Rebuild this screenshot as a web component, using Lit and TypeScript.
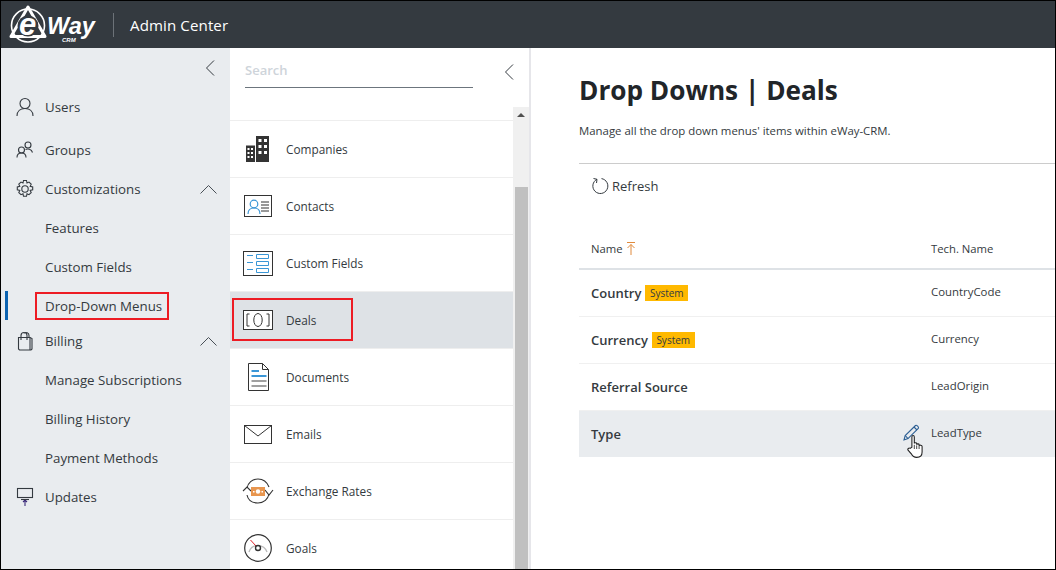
import { LitElement, html, css, svg } from "lit";
import { customElement } from "lit/decorators.js";

const chev = (up: boolean) => html`<svg class="chev" width="20" height="12" viewBox="0 0 20 12"><path d="${up ? "M1.5 10.5 9.5 2.500 17.500 10.500" : ""}" fill="none" stroke="#495057" stroke-width="1"/></svg>`;
const back = html`<svg width="10" height="18" viewBox="0 0 10 18"><path d="M9 1.500 1.500 9 9 16.500" fill="none" stroke="#343a40" stroke-width="1"/></svg>`;

const navIcons: Record<string, unknown> = {
  user: svg`<circle cx="10" cy="6.500" r="5" /><path d="M2 19c0-5 3.500-7.500 8-7.500s8 2.500 8 7.500"/>`,
  group: svg`<circle cx="13" cy="5" r="3"/><path d="M10.500 9.500c2-1 6-.5 7 3"/><circle cx="6.500" cy="10" r="3"/><path d="M2 17.500c0-3 2-4.500 4.500-4.500s4.500 1.500 4.500 4.500"/>`,
  gear: svg`<path d="M8.500 1.500h3l.5 2.500 2-.9 2.200 2.100-1 2.100 2.500.6v3l-2.500.6 1 2.100-2.200 2.100-2-.9-.5 2.500h-3l-.5-2.500-2 .9-2.200-2.100 1-2.100-2.500-.6v-3l2.500-.6-1-2.100 2.200-2.100 2 .9z"/><circle cx="10" cy="10" r="3.200"/>`,
  bag: svg`<path d="M3.500 6.500h11.500l2 1v10.500l-1 1H4.500l-1-1z"/><path d="M15 6.500v12.500"/><path d="M6 9V4.500a3 3 0 0 1 6 0V9M9 2c2-1.200 5 0 5 2.500v2"/>`,
  updates: svg`<rect x="2.500" y="1.500" width="15" height="9" /><path d="M10 19v-6M8 15l2-2 2 2" stroke="#3b2a7a"/><path d="M6 12.500h8"/>`,
};

const navIcon = (k: string) => html`<svg class="nav-ic" width="20" height="20" viewBox="0 0 20 20" fill="none" stroke="#343a40" stroke-width="1.100">${navIcons[k]}</svg>`;

const listIcons: Record<string, unknown> = {
  companies: svg`<svg class="shift" width="23" height="26" viewBox="0 0 23 26"><path d="M0 9.500h9V26H0zM10 0h13v26H10z" fill="#333"/><path d="M1.500 12h2v2h-2zM5 12h2v2H5zM1.500 16h2v2h-2zM5 16h2v2H5zM1.500 20h2v2h-2zM5 20h2v2H5zM12.500 3h3v3h-3zM18 3h3v3h-3zM12.500 9h3v3h-3zM18 9h3v3h-3zM12.500 15h3v3h-3zM18 15h3v3h-3z" fill="#fff"/></svg>`,
  contacts: svg`<svg width="28" height="22" viewBox="0 0 28 22"><rect x=".5" y=".5" width="27" height="21" fill="#fff" stroke="#333"/><circle cx="10" cy="9" r="3.800" fill="none" stroke="#3a96d6" stroke-width="1.200"/><path d="M4 19c0-4 2.500-6 6-6s6 2 6 6" fill="none" stroke="#3a96d6" stroke-width="1.200"/><path d="M17 7h8M17 10h8M17 13h8M17 16h8" stroke="#333"/></svg>`,
  fields: svg`<svg width="30" height="25" viewBox="0 0 30 25"><rect x=".5" y=".5" width="29" height="24" fill="#fff" stroke="#333"/><path d="M4 4.500h6M4 11.500h6M4 18.500h6" stroke="#3a96d6"/><path d="M13.500 3.500h12v4h-12zM13.500 10.500h12v4h-12zM13.500 17.500h12v4h-12z" fill="none" stroke="#3a96d6"/></svg>`,
  deals: svg`<svg width="30" height="20" viewBox="0 0 30 20"><rect x=".5" y=".5" width="29" height="19" fill="#fff" stroke="#333"/><path d="M6.500 4H4v12h2.500M23.500 4H26v12h-2.500" fill="none" stroke="#333"/><ellipse cx="15" cy="10" rx="4.200" ry="6.500" fill="none" stroke="#333"/></svg>`,
  documents: svg`<svg width="21" height="28" viewBox="0 0 21 28"><path d="M.5.500h14l6 6v21H.5z" fill="#fff" stroke="#333"/><path d="M14.500.500v6h6" fill="none" stroke="#333"/><path d="M3.500 8h7.500M3.500 13h15" stroke="#3a96d6" stroke-width="2"/><path d="M3.500 18h15M3.500 23h15" stroke="#a0a0a0" stroke-width="2"/></svg>`,
  emails: svg`<svg width="28" height="19" viewBox="0 0 28 19"><rect x=".5" y=".5" width="27" height="18" fill="#fff" stroke="#333"/><path d="M.5.500 14 11 27.500.500" fill="none" stroke="#333"/></svg>`,
  rates: svg`<svg width="32" height="26" viewBox="0 0 32 26"><path d="M5 10C6 5 10 1 16 1s9 3 11 8M27 16c-1 5-5 9-11 9s-10-3-11-8" fill="none" stroke="#333" stroke-width="1.100"/><path d="M1 13l4-4 4 4M23 12l4 5 4-5" fill="none" stroke="#333" stroke-width="1.100"/><path d="M9 9h14v9H9z" fill="#e8964f"/><circle cx="16" cy="13.500" r="2.200" fill="#fff"/><path d="M11 13h1.500v1.500H11zM19.500 13H21v1.500h-1.500z" fill="#fff"/></svg>`,
  goals: svg`<svg width="28" height="28" viewBox="0 0 28 28"><circle cx="14" cy="14" r="13.300" fill="none" stroke="#333" stroke-width="1.200"/><path d="M5 18A9.500 9.500 0 0 1 23 18" fill="none" stroke="#bbb" stroke-width="1.300"/><path d="M6.500 6 12 12" stroke="#e0202a"/><circle cx="14" cy="14" r="2.500" fill="#fff" stroke="#333" stroke-width="1.400"/></svg>`,
};

@customElement("app-root")
export class AppRoot extends LitElement {
  static styles = css`
    :host { display: block; width: 1056px; height: 570px; box-sizing: border-box; border: 1px solid #000; overflow: hidden; background: #fff; font-family: "Open Sans", "Noto Sans", sans-serif; color: #212529; }
    header { height: 47px; background: #343a40; display: flex; align-items: center; color: #fff; }
    .logo { margin-left: 8px; width: 97px; height: 42px; flex: none; }
    .vsep { width: 1px; height: 24px; background: #6c7278; margin-left: 7px; }
    .title { margin-left: 16px; font-size: 15.1px; letter-spacing: .1px; }
    .body { display: flex; height: 521px; }
    nav { width: 229px; flex: none; background: #e9ecef; position: relative; }
    .nav-top { height: 39px; display: flex; justify-content: flex-end; align-items: center; padding-right: 15px; box-sizing: border-box; }
    .item { display: flex; align-items: center; height: 39px; font-size: 13.3px; color: #343a40; position: relative; padding-left: 14px; box-sizing: border-box; }
    .item .nav-ic { flex: none; margin-right: 10px; }
    .item .chev { margin-left: auto; margin-right: 11px; }
    .item.sub { padding-left: 44px; }
    .item.gap-s { margin-bottom: -4px; }
    .item.gap-l { margin-top: 4px; }
    .bar { position: absolute; left: 4px; top: 5px; height: 29px; width: 3px; background: #0b62b0; }
    .redbox { position: absolute; border: 2px solid #ed1c24; box-sizing: border-box; pointer-events: none; }
    .redbox.a { left: 34px; top: 6px; width: 134px; height: 28px; }
    .redbox.b { left: 2px; top: 6px; width: 121px; height: 43px; }
    .mid { width: 301px; flex: none; display: flex; flex-direction: column; border-right: 2px solid #e6e6ea; box-sizing: border-box; }
    .search { height: 59px; flex: none; display: flex; align-items: flex-start; padding: 11px 14px 0 15px; box-sizing: border-box; }
    .search-field { width: 228px; height: 28px; border-bottom: 1px solid #6c757d; font-size: 13px; font-weight: 600; color: #ced4da; line-height: 22px; }
    .search svg { margin-left: 31px; margin-top: 4px; }
    .listwrap { flex: 1; display: flex; min-height: 0; }
    .list { flex: 1; min-width: 0; overflow: hidden; padding-top: 13px; }
    .row { height: 57px; border-top: 1px solid #eee; box-sizing: border-box; display: flex; align-items: center; font-size: 11.8px; color: #343a40; position: relative; }
    .row.on { background: #dee2e6; }
    .ic { width: 56px; flex: none; display: flex; justify-content: center; box-sizing: border-box; }
    .ic svg { display: block; }
    .ic svg.shift { margin-right: 2px; }
    .scroll { width: 16px; flex: none; background: #f0f0f0; position: relative; }
    .scroll .arrow { margin: 6px auto 0; width: 0; height: 0; border: 4px solid transparent; border-top: 0; border-bottom: 4px solid #505050; }
    .scroll .thumb { position: absolute; left: 2px; right: 1px; top: 80px; bottom: 0; background: #c0c0c0; }
    main { flex: 1; min-width: 0; padding: 24px 0 0 48px; }
    h1 { margin: 0; font-size: 26.2px; line-height: 36px; font-weight: 700; color: #212529; }
    .desc { margin-top: 15px; font-size: 11.4px; line-height: 16px; color: #343a40; }
    .rule { margin-top: 24px; border-top: 1px solid #ccc; }
    .refresh { height: 44px; display: flex; align-items: center; padding-left: 12px; gap: 3px; font-size: 13px; color: #343a40; }
    .refresh svg { flex: none; }
    .thead { margin-top: 20px; height: 42px; border-bottom: 2px solid #dee2e6; box-sizing: border-box; }
    .thead, .tr { display: grid; grid-template-columns: 340px 1fr; align-items: center; padding-left: 12px; }
    .thead { font-size: 11.3px; color: #343a40; }
    .thead .n { display: flex; align-items: center; gap: 3px; }
    .tr { height: 47px; border-bottom: 1px solid #f0f0f0; box-sizing: border-box; position: relative; }
    .tr.hover { background: #e9ecef; border-bottom: 0; height: 46px; }
    .name { display: flex; align-items: center; font-size: 13px; font-weight: 600; color: #343a40; }
    .badge { background: #ffb900; color: #343a40; font-size: 10px; font-weight: 400; line-height: 16px; padding: 0 4.5px; margin-left: 4px; }
    .tech { font-size: 11.4px; color: #343a40; margin-top: -4px; }
    .pen { position: absolute; left: 324px; top: 13px; }
    .hand { position: absolute; left: 328px; top: 23px; }
  `;

  private logo() {
    return html`<svg class="logo" viewBox="0 0 97 42">
      <circle cx="19" cy="21.500" r="16.500" fill="none" stroke="#fff" stroke-width="1.600"/>
      <path d="M19 3 36 32.500H2z" fill="none" stroke="#fff" stroke-width="3" stroke-linejoin="round"/>
      <circle cx="19" cy="22" r="10.500" fill="#343a40"/>
      <text x="10" y="30.500" font-family="Liberation Sans" font-style="italic" font-weight="700" font-size="31" fill="#fff">e</text>
      <text x="38" y="29.500" font-family="Liberation Sans" font-style="italic" font-weight="700" font-size="23.500" fill="#fff">Way</text>
      <text x="53" y="38" font-family="Liberation Sans" font-style="italic" font-weight="700" font-size="6" fill="#fff">CRM</text>
    </svg>`;
  }

  private listRow(k: string, label: string, on = false) {
    return html`<div class="row ${on ? "on" : ""}">
      <div class="ic">${listIcons[k]}</div><span>${label}</span>
      ${on ? html`<div class="redbox b"></div>` : ""}
    </div>`;
  }

  render() {
    return html`
      <header>${this.logo()}<div class="vsep"></div><div class="title">Admin Center</div></header>
      <div class="body">
        <nav>
          <div class="nav-top">${back}</div>
          <div class="item">${navIcon("user")}Users</div>
          <div class="item gap-l">${navIcon("group")}Groups</div>
          <div class="item">${navIcon("gear")}Customizations${chev(true)}</div>
          <div class="item sub">Features</div>
          <div class="item sub">Custom Fields</div>
          <div class="item sub gap-s"><div class="bar"></div><div class="redbox a"></div>Drop-Down Menus</div>
          <div class="item">${navIcon("bag")}Billing${chev(true)}</div>
          <div class="item sub">Manage Subscriptions</div>
          <div class="item sub">Billing History</div>
          <div class="item sub">Payment Methods</div>
          <div class="item">${navIcon("updates")}Updates</div>
        </nav>
        <section class="mid">
          <div class="search"><div class="search-field">Search</div>${back}</div>
          <div class="listwrap">
            <div class="list">
              ${this.listRow("companies", "Companies")}
              ${this.listRow("contacts", "Contacts")}
              ${this.listRow("fields", "Custom Fields")}
              ${this.listRow("deals", "Deals", true)}
              ${this.listRow("documents", "Documents")}
              ${this.listRow("emails", "Emails")}
              ${this.listRow("rates", "Exchange Rates")}
              ${this.listRow("goals", "Goals")}
            </div>
            <div class="scroll"><div class="arrow"></div><div class="thumb"></div></div>
          </div>
        </section>
        <main>
          <h1>Drop Downs | Deals</h1>
          <div class="desc">Manage all the drop down menus' items within eWay-CRM.</div>
          <div class="rule"></div>
          <div class="refresh">
            <svg width="18" height="18" viewBox="0 0 18 18" fill="none" stroke="#343a40"><path d="M6 2.300A7.500 7.500 0 1 0 10.500 1.600"/><path d="M2.500 1.500 6 2.300 5.500 6"/></svg>
            Refresh
          </div>
          <div class="thead">
            <div class="n">Name <svg width="10" height="13" viewBox="0 0 10 13" fill="none" stroke="#e08a3c"><path d="M1 .5h8M5 13V2.500M1.500 6l3.500-3.500L8.500 6"/></svg></div>
            <div>Tech. Name</div>
          </div>
          <div class="tr"><div class="name">Country<span class="badge">System</span></div><div class="tech">CountryCode</div></div>
          <div class="tr"><div class="name">Currency<span class="badge">System</span></div><div class="tech">Currency</div></div>
          <div class="tr"><div class="name">Referral Source</div><div class="tech">LeadOrigin</div></div>
          <div class="tr hover"><div class="name">Type</div><div class="tech">LeadType</div>
            <svg class="pen" width="17" height="17" viewBox="0 0 17 17" fill="none" stroke="#2c5f94" stroke-width="1.100"><path d="M1 16l1.200-4.500L12.500 1.500c1-.9 3.800 1.800 2.800 2.800L5 14.600z"/><path d="M2.200 11.500 5 14.600M11 3l3 3"/></svg>
            <svg class="hand" width="17" height="24" viewBox="0 0 14 20"><path d="M4 11V2.500c0-1.700 2-1.700 2 0V8c0-1 2-1 2 0v1c0-1 2-1 2 0v1c0-1 2.500-1 2.500.5v4.500c0 3-2 4.500-4.500 4.500-2 0-3.500-1-4.500-3L.8 13.500c-.7-1 .7-2.300 1.700-1.500z" fill="#fff" stroke="#222" stroke-width=".9"/><path d="M6 9v3.500M8 9.500v3M10 10v2.500" stroke="#222" stroke-width=".7"/></svg>
          </div>
        </main>
      </div>
    `;
  }
}
